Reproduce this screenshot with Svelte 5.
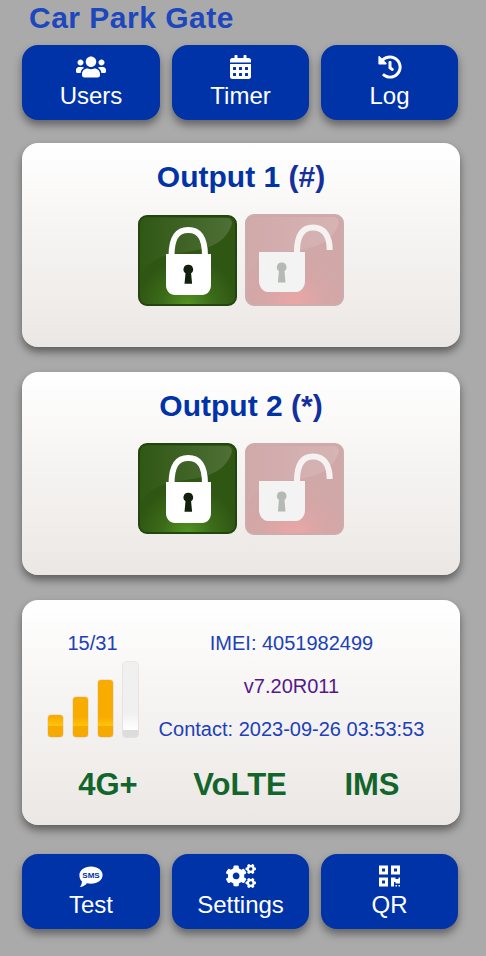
<script>
  const P = {
    users: ['0 0 640 512','M96 224c35.3 0 64-28.7 64-64s-28.7-64-64-64-64 28.7-64 64 28.7 64 64 64zm448 0c35.3 0 64-28.7 64-64s-28.7-64-64-64-64 28.7-64 64 28.7 64 64 64zm32 32h-64c-17.6 0-33.5 7.1-45.1 18.6 40.3 22.1 68.9 62 75.1 109.4h66c17.7 0 32-14.3 32-32v-32c0-35.3-28.7-64-64-64zm-256 0c61.9 0 112-50.1 112-112S381.9 32 320 32 208 82.1 208 144s50.1 112 112 112zm76.8 32h-8.3c-20.8 10-43.9 16-68.5 16s-47.6-6-68.5-16h-8.3C179.6 288 128 339.6 128 403.2V432c0 26.5 21.5 48 48 48h288c26.5 0 48-21.5 48-48v-28.8c0-63.6-51.6-115.2-115.2-115.2zm-223.7-13.4C161.5 263.1 145.6 256 128 256H64c-35.3 0-64 28.7-64 64v32c0 17.7 14.3 32 32 32h65.9c6.3-47.4 34.9-87.3 75.2-109.4z'],
    calendar: ['0 0 448 512','M0 464c0 26.5 21.5 48 48 48h352c26.5 0 48-21.5 48-48V192H0v272zm320-196c0-6.6 5.4-12 12-12h40c6.6 0 12 5.4 12 12v40c0 6.6-5.4 12-12 12h-40c-6.6 0-12-5.4-12-12v-40zm0 128c0-6.6 5.4-12 12-12h40c6.6 0 12 5.4 12 12v40c0 6.6-5.4 12-12 12h-40c-6.6 0-12-5.4-12-12v-40zM192 268c0-6.6 5.4-12 12-12h40c6.6 0 12 5.4 12 12v40c0 6.6-5.4 12-12 12h-40c-6.6 0-12-5.4-12-12v-40zm0 128c0-6.6 5.4-12 12-12h40c6.6 0 12 5.4 12 12v40c0 6.6-5.4 12-12 12h-40c-6.6 0-12-5.4-12-12v-40zM64 268c0-6.6 5.4-12 12-12h40c6.6 0 12 5.4 12 12v40c0 6.6-5.4 12-12 12H76c-6.6 0-12-5.4-12-12v-40zm0 128c0-6.6 5.4-12 12-12h40c6.6 0 12 5.4 12 12v40c0 6.6-5.4 12-12 12H76c-6.6 0-12-5.4-12-12v-40zM400 64h-48V16c0-8.8-7.2-16-16-16h-32c-8.8 0-16 7.2-16 16v48H160V16c0-8.8-7.2-16-16-16h-32c-8.8 0-16 7.2-16 16v48H48C21.5 64 0 85.5 0 112v48h448v-48c0-26.5-21.5-48-48-48z'],
    history: ['0 0 512 512','M504 255.531c.253 136.64-111.18 248.372-247.82 248.468-59.015.042-113.223-20.53-155.822-54.911-11.077-8.94-11.905-25.541-1.839-35.607l11.267-11.267c8.609-8.609 22.353-9.551 31.891-1.984C173.062 425.135 212.781 440 256 440c101.705 0 184-82.311 184-184 0-101.705-82.311-184-184-184-48.814 0-93.149 18.969-126.068 49.932l50.754 50.754c10.08 10.08 2.941 27.314-11.313 27.314H24c-8.837 0-16-7.163-16-16V38.627c0-14.254 17.234-21.393 27.314-11.314l49.372 49.372C129.209 34.136 189.552 8 256 8c136.81 0 247.747 110.78 248 247.531zm-180.912 78.784l9.823-12.63c8.138-10.463 6.253-25.542-4.21-33.679L288 256.349V152c0-13.255-10.745-24-24-24h-16c-13.255 0-24 10.745-24 24v135.651l65.409 50.874c10.463 8.137 25.541 6.253 33.679-4.21z'],
    cogs: ['0 0 640 512','M512.1 191l-8.2 14.3c-3 5.3-9.4 7.5-15.1 5.4-11.8-4.4-22.6-10.7-32.1-18.6-4.6-3.8-5.8-10.5-2.8-15.7l8.2-14.3c-6.9-8-12.3-17.3-15.9-27.4h-16.5c-6 0-11.2-4.3-12.2-10.3-2-12-2.1-24.6 0-37.1 1-6 6.2-10.4 12.2-10.4h16.5c3.6-10.1 9-19.4 15.9-27.4l-8.2-14.3c-3-5.2-1.9-11.9 2.8-15.7 9.5-7.9 20.4-14.2 32.1-18.6 5.7-2.1 12.1.1 15.1 5.4l8.2 14.3c10.5-1.9 21.2-1.9 31.7 0L552 6.3c3-5.3 9.4-7.5 15.1-5.4 11.8 4.4 22.6 10.7 32.1 18.6 4.6 3.8 5.8 10.5 2.8 15.7l-8.2 14.3c6.9 8 12.3 17.3 15.9 27.4h16.5c6 0 11.2 4.3 12.2 10.3 2 12 2.1 24.6 0 37.1-1 6-6.2 10.4-12.2 10.4h-16.5c-3.6 10.1-9 19.4-15.9 27.4l8.2 14.3c3 5.2 1.9 11.9-2.8 15.7-9.5 7.9-20.4 14.2-32.1 18.6-5.7 2.1-12.1-.1-15.1-5.4l-8.2-14.3c-10.4 1.9-21.2 1.9-31.7 0zm-10.5-58.8c38.5 29.6 82.4-14.3 52.8-52.8-38.5-29.7-82.4 14.3-52.8 52.8zM386.3 286.1l33.7 16.8c10.1 5.8 14.5 18.1 10.5 29.1-8.9 24.2-26.4 46.4-42.6 65.8-7.4 8.9-20.2 11.1-30.3 5.3l-29.1-16.8c-16 13.7-34.6 24.6-54.9 31.7v33.6c0 11.6-8.3 21.6-19.7 23.6-24.6 4.2-50.4 4.4-75.9 0-11.5-2-20-11.9-20-23.6V418c-20.3-7.2-38.9-18-54.9-31.7L74 403c-10 5.8-22.9 3.6-30.3-5.3-16.2-19.4-33.3-41.6-42.2-65.7-4-10.9.4-23.2 10.5-29.1l33.3-16.8c-3.9-20.9-3.9-42.4 0-63.4L12 205.8c-10.1-5.8-14.6-18.1-10.5-29 8.9-24.2 26-46.4 42.2-65.8 7.4-8.9 20.2-11.1 30.3-5.3l29.1 16.8c16-13.7 34.6-24.6 54.9-31.7V57.1c0-11.5 8.2-21.5 19.6-23.5 24.6-4.2 50.5-4.4 76-.1 11.5 2 20 11.9 20 23.6v33.6c20.3 7.2 38.9 18 54.9 31.7l29.1-16.8c10-5.8 22.9-3.6 30.3 5.3 16.2 19.4 33.2 41.6 42.1 65.8 4 10.9.1 23.2-10 29.1l-33.7 16.8c3.9 21 3.9 42.5 0 63.5zm-117.6 21.1c59.2-77-28.7-164.9-105.7-105.7-59.2 77 28.7 164.9 105.7 105.7zm243.4 182.7l-8.2 14.3c-3 5.3-9.4 7.5-15.1 5.4-11.8-4.4-22.6-10.7-32.1-18.6-4.6-3.8-5.8-10.5-2.8-15.7l8.2-14.3c-6.9-8-12.3-17.3-15.9-27.4h-16.5c-6 0-11.2-4.3-12.2-10.3-2-12-2.1-24.6 0-37.1 1-6 6.2-10.4 12.2-10.4h16.5c3.6-10.1 9-19.4 15.9-27.4l-8.2-14.3c-3-5.2-1.9-11.9 2.8-15.7 9.5-7.9 20.4-14.2 32.1-18.6 5.7-2.1 12.1.1 15.1 5.4l8.2 14.3c10.5-1.9 21.2-1.9 31.7 0l8.2-14.3c3-5.3 9.4-7.5 15.1-5.4 11.8 4.4 22.6 10.7 32.1 18.6 4.6 3.8 5.8 10.5 2.8 15.7l-8.2 14.3c6.9 8 12.3 17.3 15.9 27.4h16.5c6 0 11.2 4.3 12.2 10.3 2 12 2.1 24.6 0 37.1-1 6-6.2 10.4-12.2 10.4h-16.5c-3.6 10.1-9 19.4-15.9 27.4l8.2 14.3c3 5.2 1.9 11.9-2.8 15.7-9.5 7.9-20.4 14.2-32.1 18.6-5.7 2.1-12.1-.1-15.1-5.4l-8.2-14.3c-10.4 1.9-21.2 1.9-31.7 0zM501.6 431c38.5 29.6 82.4-14.3 52.8-52.8-38.5-29.6-82.4 14.3-52.8 52.8z'],
    qr: ['0 0 448 512','M0 224h192V32H0v192zM64 96h64v64H64V96zm192-64v192h192V32H256zm128 128h-64V96h64v64zM0 480h192V288H0v192zm64-128h64v64H64v-64zm352-64h32v128h-96v-32h-32v96h-64V288h96v32h64v-32zm0 160h32v32h-32v-32zm-64 0h32v32h-32v-32z']
  };
  const top = [['users','Users'],['calendar','Timer'],['history','Log']];
  const bottom = [['sms','Test'],['cogs','Settings'],['qr','QR']];
  const outputs = [['Output 1','#','a'],['Output 2','*','b']];
  const bars = [
    { h: 22, cls: 'on' },
    { h: 40, cls: 'on' },
    { h: 57, cls: 'on' },
    { h: 75, cls: 'off' }
  ];
</script>

{#snippet btn(item)}
  <button class="btn" type="button">
    {#if item[0] === 'sms'}
      <svg class="ico" viewBox="0 0 26 24" width="26" height="24" aria-hidden="true">
        <path fill="#fff" d="M13 2.5c6.6 0 11.6 3.6 11.6 8.6s-5 8.6-11.6 8.6c-1.500 0-2.900-.2-4.200-.5C7.300 21.300 5 22.700 1.700 23c1.300-1.200 2.100-3 2.300-5.400C2.300 16 1.400 13.700 1.400 11.100c0-5 5-8.600 11.600-8.600z"/>
        <text x="13" y="14.200" text-anchor="middle" class="smstxt">SMS</text>
      </svg>
    {:else}
      <svg class="ico" viewBox={P[item[0]][0]} height="24" aria-hidden="true"><path fill="#fff" d={P[item[0]][1]}/></svg>
    {/if}
    <span>{item[1]}</span>
  </button>
{/snippet}

{#snippet lockOn(id)}
  <svg class="tile" viewBox="0 0 99 91" width="99" height="91" aria-hidden="true">
    <defs>
      <radialGradient id="gn{id}" cx="0.5" cy="1" r="0.52">
        <stop offset="0" stop-color="#529522"/>
        <stop offset="0.5" stop-color="#3c6c19"/>
        <stop offset="1" stop-color="#2f5613"/>
      </radialGradient>
      <linearGradient id="gl{id}" x1="0" y1="0" x2="1" y2="0">
        <stop offset="0" stop-color="#fff" stop-opacity="0.01"/>
        <stop offset="1" stop-color="#fff" stop-opacity="0.15"/>
      </linearGradient>
    </defs>
    <rect x="1" y="1" width="97" height="89" rx="8" fill="url(#gn{id})" stroke="#234510" stroke-width="2"/>
    <path fill="url(#gl{id})" d="M3 60C9 47 22 41 40 38c22-3 46-5 54-29V9c0-4-2-6-5-6H9C5 3 3 5 3 9z"/>
    <path d="M33.500 41C33.500 24 38 15 50.250 15S67 24 67 41" fill="none" stroke="#fff" stroke-width="6"/>
    <path fill="#fff" d="M28 39h45v31c0 6-4 10-9 10H37c-5 0-9-4-9-10z"/>
    <path fill="#12200d" d="M50.300 49.800a4.600 4.600 0 0 1 2.800 8.400l1 10.500h-7.600l1-10.500a4.600 4.600 0 0 1 2.800-8.400z"/>
  </svg>
{/snippet}

{#snippet lockOff(id)}
  <svg class="tile" viewBox="0 0 99 92" width="99" height="92" aria-hidden="true">
    <defs>
      <radialGradient id="rd{id}" cx="0.5" cy="1" r="0.6">
        <stop offset="0" stop-color="#eca6a6"/>
        <stop offset="0.55" stop-color="#d6a6a6"/>
        <stop offset="1" stop-color="#d0a8a8"/>
      </radialGradient>
      <linearGradient id="rl{id}" x1="0" y1="0" x2="1" y2="0">
        <stop offset="0" stop-color="#fff" stop-opacity="0.02"/>
        <stop offset="1" stop-color="#fff" stop-opacity="0.14"/>
      </linearGradient>
    </defs>
    <rect x="1" y="1" width="97" height="90" rx="8" fill="url(#rd{id})" stroke="#ccacac" stroke-width="2"/>
    <path fill="url(#rl{id})" d="M3 60C9 47 22 41 40 38c22-3 46-5 54-29V9c0-4-2-6-5-6H9C5 3 3 5 3 9z"/>
    <path d="M52 38C52 22 57 13.500 68 13.500S84.700 22 84.700 36" fill="none" stroke="#f6f2f2" stroke-width="6"/>
    <path fill="#f3f3f3" d="M14 38h46v29c0 6-4 11-9 11H23c-5 0-9-5-9-11z"/>
    <path fill="#b5b9b5" d="M36.700 48.500a4.600 4.600 0 0 1 2.800 8.400l1 11.500h-7.600l1-11.500a4.600 4.600 0 0 1 2.800-8.400z"/>
  </svg>
{/snippet}

<main class="page">
  <h1>Car Park Gate</h1>

  <div class="row">
    {#each top as t}{@render btn(t)}{/each}
  </div>

  {#each outputs as o}
    <section class="card output {o[2]}">
      <h2>{o[0]} <span class="sym">({o[1]})</span></h2>
      <div class="tiles">
        {@render lockOn(o[2])}
        {@render lockOff(o[2])}
      </div>
    </section>
  {/each}

  <section class="card info">
    <div class="status">
      <div class="signal">
        <div class="level">15/31</div>
        <div class="bars">
          {#each bars as b}
            <div class="bar {b.cls}" style="height:{b.h}px"></div>
          {/each}
        </div>
      </div>
      <div class="lines">
        <div>IMEI: 4051982499</div>
        <div class="ver">v7.20R011</div>
        <div>Contact: 2023-09-26 03:53:53</div>
      </div>
    </div>
    <div class="flags">
      <div>4G+</div><div>VoLTE</div><div>IMS</div>
    </div>
  </section>

  <div class="row last">
    {#each bottom as t}{@render btn(t)}{/each}
  </div>
</main>

<style>
  :global(html), :global(body) {
    margin: 0;
    background: #aaa;
  }
  .page {
    width: 486px;
    height: 956px;
    box-sizing: border-box;
    padding: 0 26px 0 22px;
    overflow: hidden;
    font-family: "Liberation Sans", Arial, sans-serif;
  }
  h1 {
    margin: 0 0 0 7px;
    height: 45px;
    font-size: 30px;
    line-height: 36px;
    font-weight: 700;
    color: #1c47bd;
    letter-spacing: 0.5px;
  }
  .row {
    display: grid;
    grid-template-columns: 138px 137px 137px;
    gap: 12px;
  }
  .btn {
    height: 75px;
    padding: 10px 0 0;
    border: 0;
    border-radius: 16px;
    background: #0033a8;
    color: #fff;
    font: 24px/28px "Liberation Sans", Arial, sans-serif;
    display: flex;
    flex-direction: column;
    align-items: center;
    gap: 3px;
    box-shadow: 0 5px 8px rgba(0, 0, 0, 0.42);
  }
  .ico {
    display: block;
    height: 24px;
  }
  .smstxt {
    font: 700 8px "Liberation Sans", Arial, sans-serif;
    fill: #0033a8;
  }
  .card {
    width: 438px;
    box-sizing: border-box;
    border-radius: 16px;
    background: linear-gradient(to bottom, #fff, #ebe7e4);
    box-shadow: 0 5px 8px rgba(0, 0, 0, 0.45);
  }
  .output {
    height: 204px;
    margin-top: 23px;
    padding-top: 17px;
  }
  .output.b {
    height: 203px;
    margin-top: 25px;
  }
  h2 {
    margin: 0;
    text-align: center;
    font-size: 30px;
    line-height: 34px;
    font-weight: 700;
    color: #0033a8;
  }
  .sym {
    color: #14309c;
  }
  .tiles {
    display: flex;
    justify-content: center;
    align-items: center;
    gap: 8px;
    margin-top: 20px;
  }
  .output.b .tiles {
    align-items: flex-start;
  }
  .tile {
    display: block;
  }
  .info {
    height: 225px;
    margin-top: 25px;
    padding: 31px 20px 0 20px;
    color: #2040b8;
    font-size: 20px;
    line-height: 24px;
  }
  .status {
    display: flex;
  }
  .signal {
    width: 101px;
    text-align: center;
  }
  .level {
    height: 31px;
  }
  .bars {
    display: flex;
    align-items: flex-end;
    justify-content: center;
    gap: 10px;
    height: 75px;
  }
  .bar {
    width: 15px;
    border-radius: 3px;
    box-shadow: 0 0 0 0.5px rgba(200, 190, 170, 0.6);
  }
  .on {
    background: linear-gradient(to top, #f6a900 0 11px, #ffc50a 11px, #f8ab00 20px);
  }
  .off {
    background: linear-gradient(to top, #dcdcdc 0 7px, #fff 7px, #f0f0f0 24px);
  }
  .lines {
    flex: 1;
    text-align: center;
    display: flex;
    flex-direction: column;
    gap: 19px;
    white-space: nowrap;
  }
  .ver {
    color: #55188c;
  }
  .flags {
    display: grid;
    grid-template-columns: repeat(3, 132px);
    margin-top: 27px;
    text-align: center;
    font-size: 31px;
    line-height: 34px;
    font-weight: 700;
    color: #12652b;
  }
  .last {
    margin-top: 29px;
  }
</style>
